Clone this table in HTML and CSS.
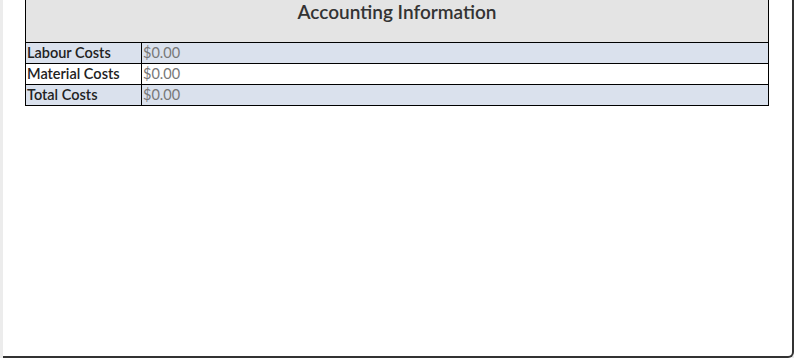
FILE: index.html
```html
<!DOCTYPE html>
<html lang="en">
<head>
    <meta charset="UTF-8">
    <meta name="viewport" content="width=device-width, initial-scale=1.0">
    <title>Accounting Information</title>
    <link rel="stylesheet" href="styles.css">
</head>
<body>
    <div class="panel">
        <table class="accounts">
            <thead>
                <tr>
                    <th colspan="2" class="title">Accounting Information</th>
                </tr>
            </thead>
            <tbody>
                <tr class="shaded">
                    <td class="label">Labour Costs</td>
                    <td class="value">$0.00</td>
                </tr>
                <tr>
                    <td class="label">Material Costs</td>
                    <td class="value">$0.00</td>
                </tr>
                <tr class="shaded">
                    <td class="label">Total Costs</td>
                    <td class="value">$0.00</td>
                </tr>
            </tbody>
        </table>
    </div>
</body>
</html>
```

FILE: styles.css
```css
html, body {
    margin: 0;
    padding: 0;
    height: 100%;
    overflow: hidden;
}
body {
    font-family: Lato, "Open Sans", Arial, sans-serif;
    background-color: #ececec;
}
.panel {
    margin-left: 3px;
    height: 356px;
    background: #fff;
    border-right: 2px solid #333;
    border-bottom: 2px solid #333;
    border-bottom-right-radius: 6px;
    padding-left: 22px;
    padding-right: 22px;
}
.accounts {
    width: 744px;
    border-collapse: collapse;
    border: 1px solid #000;
    border-top: none;
}
.accounts th,
.accounts td {
    border: 1px solid #000;
    padding: 0 1px;
}
.accounts .title {
    height: 42px;
    padding: 0;
    background: #e4e4e4;
    color: #333;
    font-size: 19px;
    line-height: 24px;
    font-weight: 600;
    text-align: center;
    vertical-align: top;
    border-top: none;
}
.accounts td {
    height: 20px;
    font-size: 14.5px;
    line-height: 18px;
}
.shaded td {
    background: #dae1ed;
}
.label {
    width: 113px;
    color: #222;
    font-weight: 600;
}
.value {
    color: #777;
    font-weight: 400;
}
```
